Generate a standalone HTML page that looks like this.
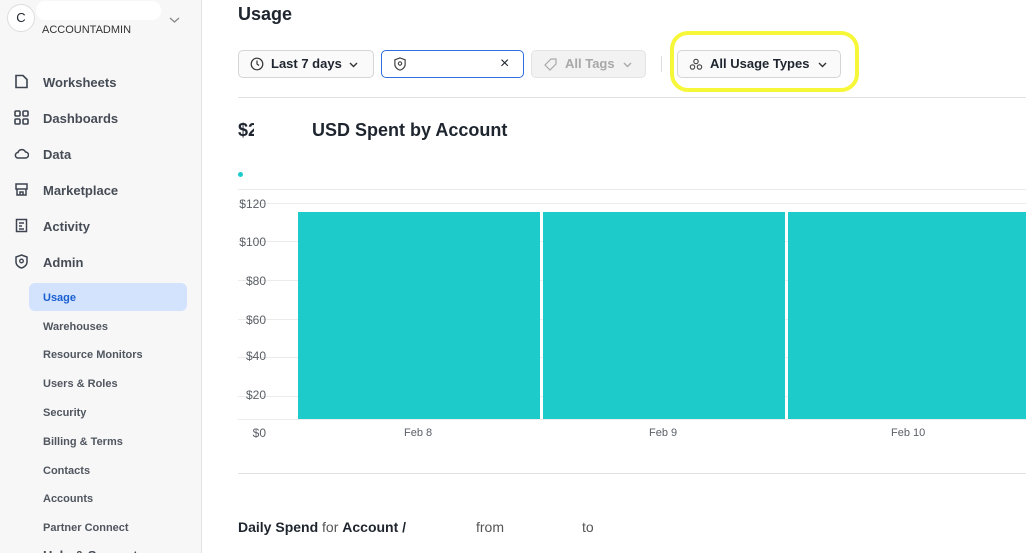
<!DOCTYPE html>
<html><head><style>
*{margin:0;padding:0;box-sizing:border-box}
html,body{width:1026px;height:553px;overflow:hidden}
body{font-family:"Liberation Sans",sans-serif;background:#fff;position:relative;color:#1e252f}
.sb{position:absolute;left:0;top:0;width:202px;height:553px;background:#f7f7f7;border-right:1px solid #e2e2e2;overflow:hidden}
.av{position:absolute;left:7px;top:4px;width:28px;height:28px;border-radius:50%;border:1px solid #ddd;background:#fff;font-size:13px;text-align:center;line-height:26px}
.nm{position:absolute;left:36px;top:1px;width:125px;height:19px;border-radius:9px;background:#fff}
.role{position:absolute;left:42px;top:24px;font-size:11px;color:#333}
.nav{position:absolute;left:43px;font-size:13px;font-weight:bold;color:#464c56}
.ic{position:absolute;left:14px;width:15px;height:15px}
.sub{position:absolute;left:43px;font-size:11px;font-weight:bold;color:#50565f}
.act{position:absolute;left:29px;top:283px;width:158px;height:28px;border-radius:6px;background:#d3e3fd}
.btn{position:absolute;top:50px;height:28px;border:1px solid #d5d5d5;border-radius:5px;background:#fafafa;font-size:13px;font-weight:bold;line-height:26px}
.yl{position:absolute;left:220px;width:46px;text-align:right;font-size:12px;color:#5a5f66}
.gl{position:absolute;left:238px;width:788px;height:1px;background:#ececec}
.bar{position:absolute;top:212px;height:207px;background:#1ecbcb}
.xl{position:absolute;top:427px;font-size:11px;color:#5a5f66}
</style></head><body>
<div class="sb">
<div class="av">C</div><div class="nm"></div>
<div class="role">ACCOUNTADMIN</div>
<svg style="position:absolute;left:169px;top:16px" width="11" height="8"><path d="M1 2l4.5 4 4.5-4" fill="none" stroke="#888" stroke-width="1.3"/></svg>
<svg class="ic" style="top:74px" viewBox="0 0 15 15"><path d="M2 1.5h7l4 4v8H2z" fill="none" stroke="#3d4450" stroke-width="1.6"/></svg>
<div class="nav" style="top:75px">Worksheets</div>
<svg class="ic" style="top:110px" viewBox="0 0 15 15"><g fill="none" stroke="#3d4450" stroke-width="1.6"><rect x="1" y="1" width="5" height="5" rx="1"/><rect x="9" y="1" width="5" height="5" rx="1"/><rect x="1" y="9" width="5" height="5" rx="1"/><rect x="9" y="9" width="5" height="5" rx="1"/></g></svg>
<div class="nav" style="top:111px">Dashboards</div>
<svg class="ic" style="top:146px" viewBox="0 0 15 15"><path d="M3.5 12h8a3 3 0 0 0 0-6 4 4 0 0 0-7.5 0.5A2.8 2.8 0 0 0 3.5 12z" fill="none" stroke="#3d4450" stroke-width="1.5"/></svg>
<div class="nav" style="top:147px">Data</div>
<svg class="ic" style="top:182px" viewBox="0 0 15 15"><path d="M2 2h11v5H2zM3 7v6h9V7M6 13V10h3v3" fill="none" stroke="#3d4450" stroke-width="1.5"/></svg>
<div class="nav" style="top:183px">Marketplace</div>
<svg class="ic" style="top:218px" viewBox="0 0 15 15"><path d="M2.5 1.5h10v12h-10zM5 5h5M5 8h3M5 11h5" fill="none" stroke="#3d4450" stroke-width="1.5"/></svg>
<div class="nav" style="top:219px">Activity</div>
<svg class="ic" style="top:254px" viewBox="0 0 15 15"><path d="M7.5 1l5.5 2v5c0 3-3 5.5-5.5 6C5 13.5 2 11 2 8V3z" fill="none" stroke="#3d4450" stroke-width="1.5"/><circle cx="7.5" cy="7" r="1.8" fill="none" stroke="#3d4450" stroke-width="1.3"/></svg>
<div class="nav" style="top:255px">Admin</div>
<div class="act"></div>
<div class="sub" style="top:292px;color:#1a5fd0">Usage</div>
<div class="sub" style="top:321px">Warehouses</div>
<div class="sub" style="top:349px">Resource Monitors</div>
<div class="sub" style="top:378px">Users &amp; Roles</div>
<div class="sub" style="top:407px">Security</div>
<div class="sub" style="top:436px">Billing &amp; Terms</div>
<div class="sub" style="top:465px">Contacts</div>
<div class="sub" style="top:493px">Accounts</div>
<div class="sub" style="top:522px">Partner Connect</div>
<div class="nav" style="top:548px">Help &amp; Support</div>
</div>

<div style="position:absolute;left:238px;top:4px;font-size:18px;font-weight:bold">Usage</div>
<div class="btn" style="left:238px;width:136px;padding-left:32px">Last 7 days
<svg style="position:absolute;left:11px;top:6px" width="14" height="14"><circle cx="7" cy="7" r="5.8" fill="none" stroke="#333" stroke-width="1.2"/><path d="M7 3.5V7l2 1.5" fill="none" stroke="#333" stroke-width="1.2"/></svg>
<svg style="position:absolute;left:110px;top:11px" width="9" height="6"><path d="M1 1l3.5 3.5L8 1" fill="none" stroke="#333" stroke-width="1.4"/></svg></div>
<div class="btn" style="left:381px;width:143px;border-color:#2f6fe0;background:#fff">
<svg style="position:absolute;left:11px;top:6px" width="14" height="14" viewBox="0 0 15 15"><path d="M7.5 1l5.5 2v5c0 3-3 5.5-5.5 6C5 13.5 2 11 2 8V3z" fill="none" stroke="#444" stroke-width="1.3"/><circle cx="7.5" cy="7" r="1.8" fill="none" stroke="#444" stroke-width="1.2"/></svg>
<span style="position:absolute;left:118px;top:0;font-weight:normal;font-size:16px">×</span></div>
<div class="btn" style="left:531px;width:115px;padding-left:33px;color:#a8a8a8;background:#f2f2f2;border-color:#e3e3e3">All Tags
<svg style="position:absolute;left:12px;top:7px" width="13" height="13"><path d="M7 1h5v5l-6 6-5-5z" fill="none" stroke="#aaa" stroke-width="1.2"/></svg>
<svg style="position:absolute;left:91px;top:11px" width="9" height="6"><path d="M1 1l3.5 3.5L8 1" fill="none" stroke="#aaa" stroke-width="1.4"/></svg></div>
<div style="position:absolute;left:661px;top:56px;width:1px;height:16px;background:#ddd"></div>
<div style="position:absolute;left:670px;top:31px;width:189px;height:61px;border:4px solid #f7f73a;border-radius:18px"></div>
<div class="btn" style="left:677px;width:164px;padding-left:32px">All Usage Types
<svg style="position:absolute;left:11px;top:7px" width="14" height="13"><g fill="none" stroke="#444" stroke-width="1.1"><circle cx="7" cy="3.5" r="2.2"/><circle cx="3.5" cy="9" r="2.2"/><circle cx="10.5" cy="9" r="2.2"/></g></svg>
<svg style="position:absolute;left:140px;top:11px" width="9" height="6"><path d="M1 1l3.5 3.5L8 1" fill="none" stroke="#333" stroke-width="1.4"/></svg></div>
<div style="position:absolute;left:238px;top:97px;width:788px;height:1px;background:#e2e2e2"></div>
<div style="position:absolute;left:238px;top:120px;font-size:18px;font-weight:bold;width:16px;overflow:hidden">$2</div>
<div style="position:absolute;left:312px;top:120px;font-size:18px;font-weight:bold">USD Spent by Account</div>
<div style="position:absolute;left:238px;top:172px;width:5px;height:5px;border-radius:50%;background:#1ecbcb"></div>
<div class="gl" style="top:189px"></div>
<div class="gl" style="top:203px"></div><div class="gl" style="top:241px"></div><div class="gl" style="top:280px"></div><div class="gl" style="top:319px"></div><div class="gl" style="top:357px"></div><div class="gl" style="top:396px"></div><div class="gl" style="top:419px"></div>
<div class="yl" style="top:197px">$120</div><div class="yl" style="top:235px">$100</div><div class="yl" style="top:274px">$80</div><div class="yl" style="top:313px">$60</div><div class="yl" style="top:349px">$40</div><div class="yl" style="top:388px">$20</div><div class="yl" style="top:426px">$0</div>
<div class="bar" style="left:298px;width:242px"></div>
<div class="bar" style="left:543px;width:242px"></div>
<div class="bar" style="left:788px;width:238px"></div>
<div class="xl" style="left:404px">Feb 8</div><div class="xl" style="left:649px">Feb 9</div><div class="xl" style="left:891px">Feb 10</div>
<div style="position:absolute;left:238px;top:473px;width:788px;height:1px;background:#e2e2e2"></div>
<div style="position:absolute;left:238px;top:519px;font-size:14px;color:#1e252f"><b>Daily Spend</b> <span style="color:#555">for</span> <b>Account /</b><span style="position:absolute;left:238px;color:#555;white-space:nowrap">from</span><span style="position:absolute;left:344px;color:#555;white-space:nowrap">to</span></div>
</body></html>
